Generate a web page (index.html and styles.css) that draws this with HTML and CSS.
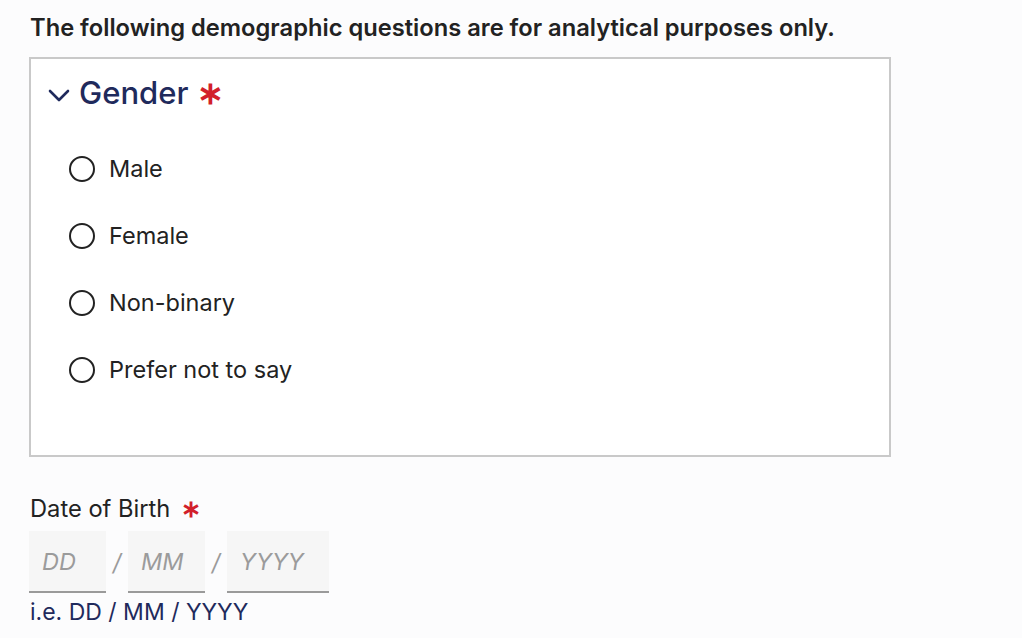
FILE: index.html
```html
<!DOCTYPE html>
<html lang="en">
<head>
<meta charset="utf-8">
<title>Demographics</title>
<link rel="stylesheet" href="styles.css">
</head>
<body>
<main class="page">
  <p class="intro">The following demographic questions are for analytical purposes only.</p>
  <fieldset class="group">
    <legend class="group-title">
      <svg class="chev" width="22" height="14" viewBox="0 0 22 14"><path d="M2 3 L11 12 L20 3" fill="none" stroke="#1f2a5c" stroke-width="2.6" stroke-linecap="round" stroke-linejoin="round"/></svg>
      <span>Gender</span>
      <span class="req">∗</span>
    </legend>
    <div class="options">
      <label class="option"><span class="radio"></span>Male</label>
      <label class="option"><span class="radio"></span>Female</label>
      <label class="option"><span class="radio"></span>Non-binary</label>
      <label class="option"><span class="radio"></span>Prefer not to say</label>
    </div>
  </fieldset>
  <div class="dob">
    <div class="dob-label">Date of Birth <span class="req small">∗</span></div>
    <div class="dob-fields">
      <span class="field dd">DD</span>
      <span class="sep">/</span>
      <span class="field mm">MM</span>
      <span class="sep">/</span>
      <span class="field yyyy">YYYY</span>
    </div>
    <div class="hint">i.e. DD / MM / YYYY</div>
  </div>
</main>
</body>
</html>
```

FILE: styles.css
```css
html, body {
  margin: 0;
  padding: 0;
  background: #fcfcfd;
}
body {
  font-family: Inter, "Liberation Sans", Arial, sans-serif;
  color: #222;
}
.page {
  padding: 13px 0 0 30px;
}
.intro {
  margin: 0;
  font-size: 23.7px;
  font-weight: 600;
  color: #222;
  line-height: 30px;
}
.group {
  margin: 14px 0 0 -1px;
  width: 862px;
  height: 400px;
  box-sizing: border-box;
  border: 2px solid #c9c9c9;
  background: #fff;
  padding: 0;
  display: block;
}
.group-title {
  display: flex;
  align-items: center;
  padding: 14px 0 0 17px;
  margin: 0;
  float: left;
  width: 100%;
  box-sizing: border-box;
  font-size: 31px;
  font-weight: 500;
  color: #1f2a5c;
  line-height: 40px;
}
.chev {
  margin-right: 9px;
  margin-top: 3px;
}
.req {
  color: #d21f2b;
  margin-left: 9px;
  font-size: 32px;
  font-weight: bold;
}
.options {
  clear: both;
  display: flex;
  flex-direction: column;
  gap: 39px;
  padding: 42px 0 0 38px;
}
.option {
  display: flex;
  align-items: center;
  font-size: 23.5px;
  line-height: 28px;
  color: #222;
}
.radio {
  width: 22px;
  height: 22px;
  border: 2px solid #222;
  border-radius: 50%;
  margin-right: 14px;
  flex: none;
}
.dob {
  padding-top: 37px;
}
.dob-label {
  font-size: 23.7px;
  line-height: 30px;
  color: #222;
}
.req.small {
  font-size: 24px;
  margin-left: 4px;
}
.dob-fields {
  display: flex;
  align-items: center;
  margin-top: 7px;
  margin-left: -1px;
}
.field {
  background: #f6f6f6;
  border-bottom: 2px solid #9a9a9a;
  height: 62px;
  box-sizing: border-box;
  display: flex;
  align-items: center;
  padding-left: 13px;
  font-size: 23.5px;
  font-style: italic;
  color: #9b9b9b;
}
.dd { width: 77px; }
.mm { width: 77px; }
.yyyy { width: 102px; }
.sep {
  width: 22px;
  text-align: center;
  font-size: 23.5px;
  font-style: italic;
  color: #9b9b9b;
}
.hint {
  font-size: 23px;
  line-height: 30px;
  color: #1f2a5c;
  margin-top: 4px;
}
```
